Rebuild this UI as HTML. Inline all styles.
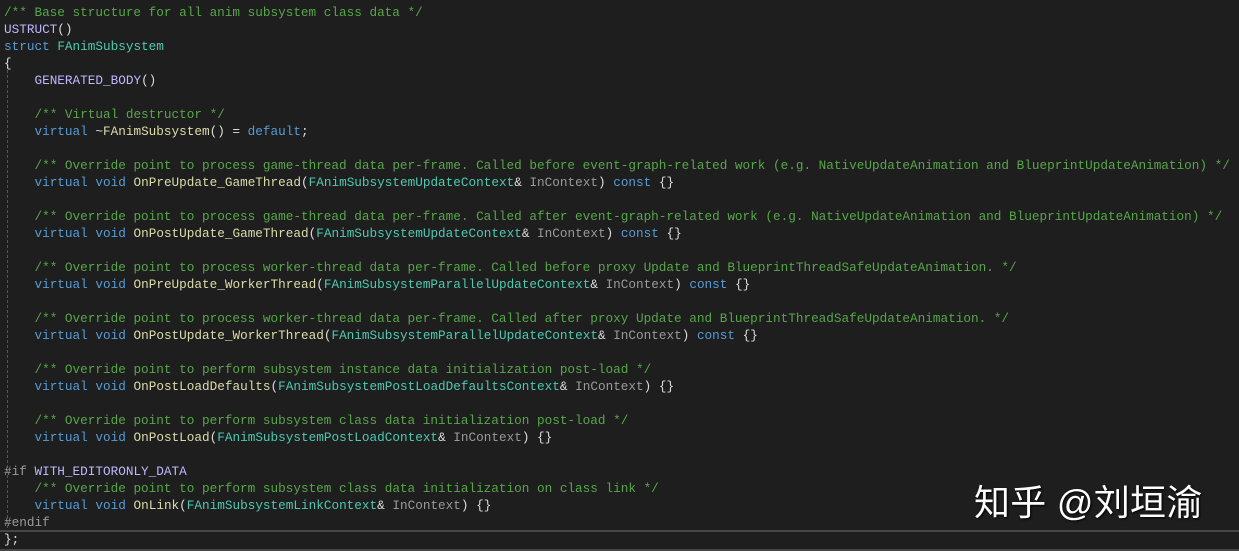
<!DOCTYPE html>
<html><head><meta charset="utf-8"><style>
html,body{margin:0;padding:0;background:#1e1e1e;width:1239px;height:550px;overflow:hidden}
pre{margin:0;position:absolute;left:4px;top:4px;font-family:"Liberation Mono",monospace;font-size:12.7px;line-height:17px;color:#dcdcdc}
.c{color:#57a64a}.k{color:#569cd6}.f{color:#dcdcaa}.t{color:#4ec9b0}.m{color:#beb7ff}.p{color:#9a9a9a}.pp{color:#9b9b9b}
.guide{position:absolute;left:7px;top:60px;height:468px;border-left:1px dashed #555}
.cur{position:absolute;left:0;top:530px;width:1239px;height:17px;border-top:2px solid #464646;border-bottom:2px solid #464646}
.wm{position:absolute;left:974px;top:474px;font-family:"Liberation Sans","Noto Sans CJK SC",sans-serif;font-size:36px;color:#fff;text-shadow:1px 1px 2px #000;letter-spacing:0.3px}
</style></head><body>
<div class="cur"></div>
<div class="guide"></div>
<pre><span class="c">/** Base structure for all anim subsystem class data */</span>
<span class="m">USTRUCT</span>()
<span class="k">struct</span> <span class="t">FAnimSubsystem</span>
{
    <span class="m">GENERATED_BODY</span>()

    <span class="c">/** Virtual destructor */</span>
    <span class="k">virtual</span> ~<span class="f">FAnimSubsystem</span>() = <span class="k">default</span>;

    <span class="c">/** Override point to process game-thread data per-frame. Called before event-graph-related work (e.g. NativeUpdateAnimation and BlueprintUpdateAnimation) */</span>
    <span class="k">virtual</span> <span class="k">void</span> <span class="f">OnPreUpdate_GameThread</span>(<span class="t">FAnimSubsystemUpdateContext</span>&amp; <span class="p">InContext</span>) <span class="k">const</span> {}

    <span class="c">/** Override point to process game-thread data per-frame. Called after event-graph-related work (e.g. NativeUpdateAnimation and BlueprintUpdateAnimation) */</span>
    <span class="k">virtual</span> <span class="k">void</span> <span class="f">OnPostUpdate_GameThread</span>(<span class="t">FAnimSubsystemUpdateContext</span>&amp; <span class="p">InContext</span>) <span class="k">const</span> {}

    <span class="c">/** Override point to process worker-thread data per-frame. Called before proxy Update and BlueprintThreadSafeUpdateAnimation. */</span>
    <span class="k">virtual</span> <span class="k">void</span> <span class="f">OnPreUpdate_WorkerThread</span>(<span class="t">FAnimSubsystemParallelUpdateContext</span>&amp; <span class="p">InContext</span>) <span class="k">const</span> {}

    <span class="c">/** Override point to process worker-thread data per-frame. Called after proxy Update and BlueprintThreadSafeUpdateAnimation. */</span>
    <span class="k">virtual</span> <span class="k">void</span> <span class="f">OnPostUpdate_WorkerThread</span>(<span class="t">FAnimSubsystemParallelUpdateContext</span>&amp; <span class="p">InContext</span>) <span class="k">const</span> {}

    <span class="c">/** Override point to perform subsystem instance data initialization post-load */</span>
    <span class="k">virtual</span> <span class="k">void</span> <span class="f">OnPostLoadDefaults</span>(<span class="t">FAnimSubsystemPostLoadDefaultsContext</span>&amp; <span class="p">InContext</span>) {}

    <span class="c">/** Override point to perform subsystem class data initialization post-load */</span>
    <span class="k">virtual</span> <span class="k">void</span> <span class="f">OnPostLoad</span>(<span class="t">FAnimSubsystemPostLoadContext</span>&amp; <span class="p">InContext</span>) {}

<span class="pp">#if</span> <span class="m">WITH_EDITORONLY_DATA</span>
    <span class="c">/** Override point to perform subsystem class data initialization on class link */</span>
    <span class="k">virtual</span> <span class="k">void</span> <span class="f">OnLink</span>(<span class="t">FAnimSubsystemLinkContext</span>&amp; <span class="p">InContext</span>) {}
<span class="pp">#endif</span>
};</pre>
<div class="wm">知乎 @刘垣渝</div>
</body></html>
